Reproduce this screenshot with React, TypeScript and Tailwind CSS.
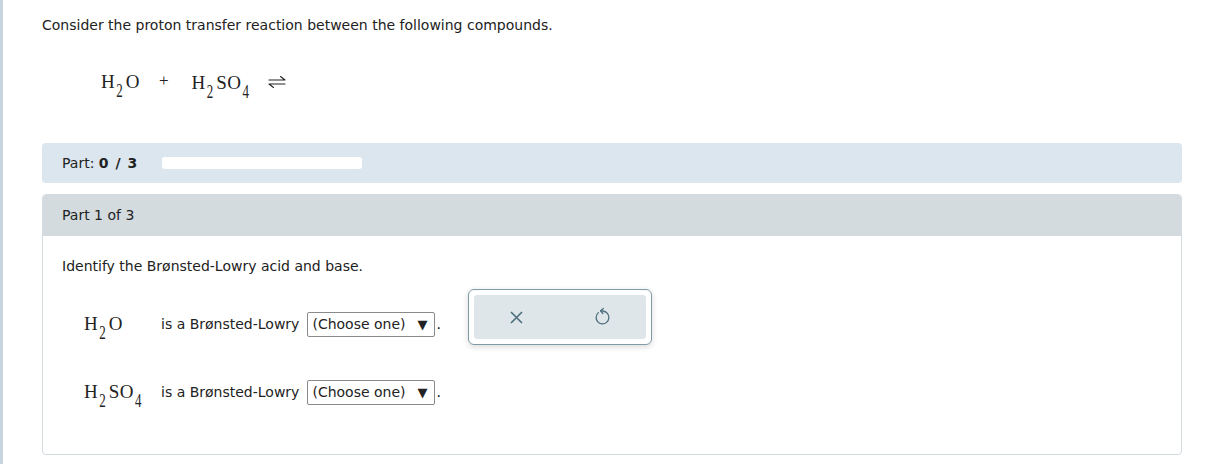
import { RotateCcw } from "lucide-react";

const sans = "font-['DejaVu_Sans',Verdana,sans-serif]";
const serif = "font-['Liberation_Serif','Times_New_Roman',serif]";

function Formula({ parts }: { parts: [string, string?][] }) {
    return (
        <span className={`${serif} inline-flex items-baseline text-[19px] leading-none text-[#222]`}>
            {parts.map(([el, sub], i) => (
                <span key={i} className="inline-flex items-baseline">
                    <span className="tracking-[0.5px]">{el}</span>
                    {sub && (
                        <span className="relative top-[10px] ml-[1px] mr-[3px] inline-block origin-bottom scale-y-[1.45] text-[13px] leading-none">
                            {sub}
                        </span>
                    )}
                </span>
            ))}
        </span>
    );
}

function Equilibrium() {
    return (
        <svg width="18" height="14" viewBox="0 0 18 14" fill="none" stroke="#222" strokeWidth="1.1" strokeLinecap="round">
            <path d="M1 5 H17 M17 5 L12.5 1.5" />
            <path d="M17 9 H1 M1 9 L5.5 12.5" />
        </svg>
    );
}

function ChooseSelect() {
    return (
        <span className="inline-flex h-[25px] items-center rounded-[2px] border border-[#8a8a8a] pl-[4px] pr-[6px] text-[14px] text-[#222]">
            (Choose one)
            <span className="ml-[12px] text-[13px]">▼</span>
        </span>
    );
}

function Row({ formula }: { formula: [string, string?][] }) {
    return (
        <div className="flex items-center">
            <div className="w-[77px]">
                <Formula parts={formula} />
            </div>
            <span className="text-[14px] text-[#222]">is a Brønsted-Lowry</span>
            <span className="ml-[8px]">
                <ChooseSelect />
            </span>
            <span className="ml-[2px] text-[14px]">.</span>
        </div>
    );
}

export default function App() {
    return (
        <div className={`${sans} flex min-h-[464px] bg-white`}>
            <div className="w-[3px] bg-[#c9d5de]" />
            <div className="flex-1 pl-[39px] pr-[26px]">
                <p className="pt-[15px] text-[14px] text-[#222]">
                    Consider the proton transfer reaction between the following compounds.
                </p>
                <div className="mt-[36px] flex h-[33px] items-start pl-[59px]">
                    <Formula parts={[["H", "2"], ["O"]]} />
                    <span className={`${serif} ml-[19px] text-[17px] leading-none text-[#222]`}>+</span>
                    <span className="ml-[23px]">
                        <Formula parts={[["H", "2"], ["SO", "4"]]} />
                    </span>
                    <span className="ml-[16px] mt-[3px] flex">
                        <Equilibrium />
                    </span>
                </div>

                <div className="mt-[38px] flex h-[40px] items-center rounded-[4px] bg-[#dbe6ef] px-[20px]">
                    <span className="text-[14px] text-[#222]">
                        Part: <b className="font-bold tracking-[1px]">0 / 3</b>
                    </span>
                    <div className="ml-[24px] h-[12px] w-[200px] rounded-[3px] bg-white" />
                </div>

                <div className="mt-[11px] overflow-hidden rounded-[4px] border border-[#d3dbde]">
                    <div className="flex h-[41px] items-center bg-[#d3dbde] px-[19px] text-[14px] text-[#222]">
                        Part 1 of 3
                    </div>
                    <div className="relative h-[218px] px-[19px] pt-[20px]">
                        <p className="text-[14px] text-[#222]">Identify the Brønsted-Lowry acid and base.</p>
                        <div className="mt-[35px] flex flex-col gap-[43px] pl-[22px]">
                            <Row formula={[["H", "2"], ["O"]]} />
                            <Row formula={[["H", "2"], ["SO", "4"]]} />
                        </div>
                        <div className="absolute left-[425px] top-[53px] rounded-[6px] border border-[#7f9ba6] bg-white p-[5px] shadow-[0_2px_6px_rgba(0,0,0,0.15)]">
                            <div className="flex h-[44px] w-[172px] items-center justify-around rounded-[3px] bg-[#dfe6e9] text-[#4a6e7c]">
                                <svg width="13" height="13" viewBox="0 0 13 13" fill="none" stroke="currentColor" strokeWidth="1.6">
                                    <path d="M1 1 L12 12 M12 1 L1 12" />
                                </svg>
                                <RotateCcw size={17} strokeWidth={1.8} className="rotate-[50deg]" />
                            </div>
                        </div>
                    </div>
                </div>
            </div>
        </div>
    );
}
